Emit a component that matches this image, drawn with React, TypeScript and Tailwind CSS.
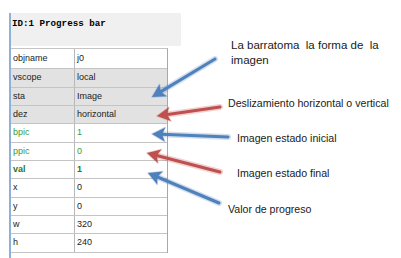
import React from "react";

type Row = { k: string; v: string; h: number; bg: string; kc?: string; vc?: string; bold?: boolean };

const rows: Row[] = [
  { k: "objname", v: "j0", h: 20, bg: "bg-white" },
  { k: "vscope", v: "local", h: 19, bg: "bg-[#e2e2e2]" },
  { k: "sta", v: "Image", h: 18, bg: "bg-[#e2e2e2]" },
  { k: "dez", v: "horizontal", h: 18, bg: "bg-[#e2e2e2]" },
  { k: "bpic", v: "1", h: 19, bg: "bg-white", kc: "text-[#3c9a3c]", vc: "text-[#3c9a3c]" },
  { k: "ppic", v: "0", h: 18, bg: "bg-white", kc: "text-[#3c9a3c]", vc: "text-[#3c9a3c]" },
  { k: "val", v: "1", h: 18, bg: "bg-white", kc: "text-[#1d7a1d]", vc: "text-[#1d7a1d]", bold: true },
  { k: "x", v: "0", h: 19, bg: "bg-white" },
  { k: "y", v: "0", h: 18, bg: "bg-white" },
  { k: "w", v: "320", h: 18, bg: "bg-white" },
  { k: "h", v: "240", h: 19, bg: "bg-white" },
];

type Arrow = { t: [number, number]; h: [number, number]; c: string };
const arrows: Arrow[] = [
  { t: [215, 59], h: [152, 97], c: "#4f81bd" },
  { t: [220, 107], h: [157, 116], c: "#c0504d" },
  { t: [228, 137], h: [152, 134], c: "#4f81bd" },
  { t: [220, 172], h: [147, 153], c: "#c0504d" },
  { t: [219, 203], h: [148, 173], c: "#4f81bd" },
];

function ArrowShape({ a }: { a: Arrow }) {
  const [tx, ty] = a.t;
  const [hx, hy] = a.h;
  const dx = hx - tx;
  const dy = hy - ty;
  const len = Math.hypot(dx, dy);
  const ux = dx / len;
  const uy = dy / len;
  const px = -uy;
  const py = ux;
  const headLen = 13;
  const headW = 7;
  const bx = hx - ux * headLen;
  const by = hy - uy * headLen;
  const pts = [
    [hx, hy],
    [bx + px * headW, by + py * headW],
    [bx + ux * 3, by + uy * 3],
    [bx - px * headW, by - py * headW],
  ]
    .map((p) => p.join(","))
    .join(" ");
  return (
    <g>
      <line x1={tx} y1={ty} x2={bx + ux * 4} y2={by + uy * 4} stroke={a.c} strokeOpacity={0.25} strokeWidth={6} strokeLinecap="round" />
      <line x1={tx} y1={ty} x2={bx + ux * 4} y2={by + uy * 4} stroke={a.c} strokeWidth={3} strokeLinecap="round" />
      <polygon points={pts} fill={a.c} stroke={a.c} strokeOpacity={0.3} strokeWidth={1.5} strokeLinejoin="round" />
    </g>
  );
}

export default function App() {
  return (
    <div className="relative w-[401px] h-[258px] bg-white overflow-hidden flex" style={{ fontFamily: '"Liberation Sans", Arial, sans-serif' }}>
      <div className="pt-[13px] pl-[9px] w-[228px] shrink-0">
        <div className="w-[172px] h-[245px] border-l-2 border-[#8fb0d8]">
          <div
            className="w-[170px] h-[33px] bg-[#f0f0f0] pl-[1px] pt-[4px] text-[9.2px] font-bold text-black"
            style={{ fontFamily: '"Liberation Mono", "Courier New", monospace' }}
          >
            ID:1 Progress bar
          </div>
          <div className="mt-[2px] w-[157px] border-r border-[#a8a8a8] border-t border-t-[#c4c4c4]">
            {rows.map((r) => (
              <div
                key={r.k}
                className={`flex box-border border-b border-[#c4c4c4] ${r.bg}`}
                style={{ height: r.h }}
              >
                <div className={`w-[64px] border-r border-[#b8b8b8] pl-[2px] flex items-center text-[9px] ${r.kc ?? "text-[#222]"} ${r.bold ? "font-bold" : ""}`}>
                  {r.k}
                </div>
                <div className={`flex-1 pl-[2px] flex items-center text-[9px] ${r.vc ?? "text-[#222]"} ${r.bold ? "font-bold" : ""}`}>
                  {r.v}
                </div>
              </div>
            ))}
          </div>
        </div>
      </div>

      <div className="flex flex-col pt-[38px] text-[#1a1a1a] whitespace-pre">
        <div className="ml-[3px] text-[11.5px] leading-[15px]">
          <div>La barratoma  la forma de  la</div>
          <div>imagen</div>
        </div>
        <div className="mt-[28px] text-[10.6px] leading-[14px]">Deslizamiento horizontal o vertical</div>
        <div className="mt-[21px] ml-[9px] text-[10.6px] leading-[14px]">Imagen estado inicial</div>
        <div className="mt-[21px] ml-[9px] text-[10.6px] leading-[14px]">Imagen estado final</div>
        <div className="mt-[22px] text-[10.6px] leading-[14px]">Valor de progreso</div>
      </div>

      <svg className="absolute left-0 top-0 pointer-events-none" width={401} height={258}>
        {arrows.map((a, i) => (
          <ArrowShape key={i} a={a} />
        ))}
      </svg>
    </div>
  );
}
